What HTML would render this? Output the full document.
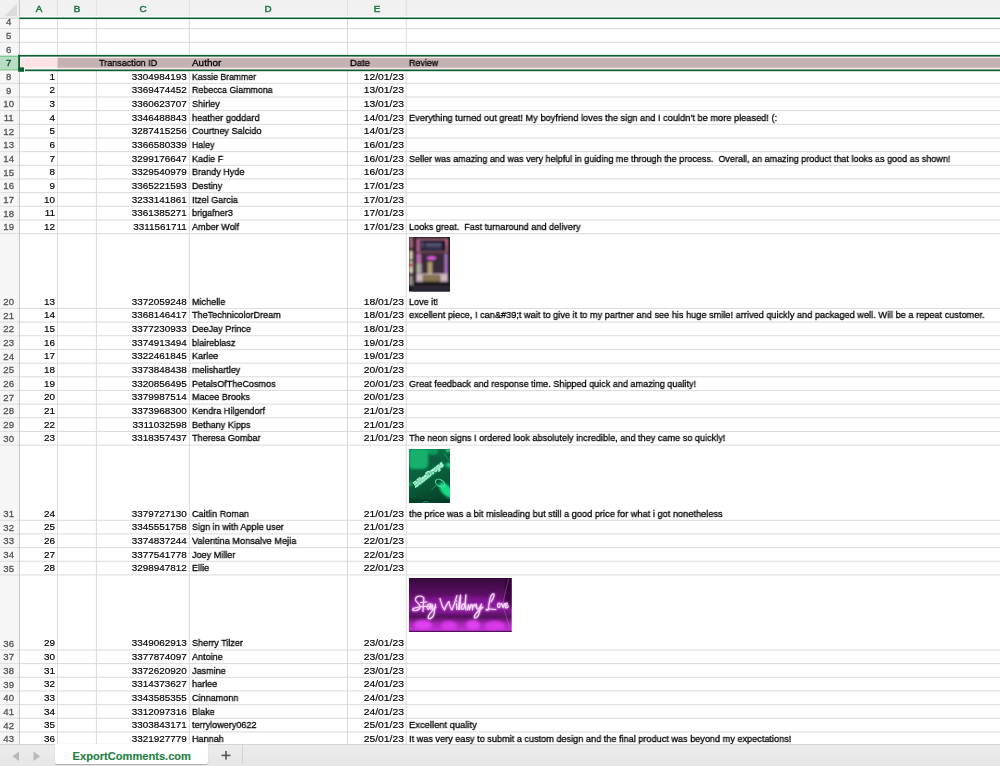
<!DOCTYPE html>
<html><head><meta charset="utf-8"><style>
*{margin:0;padding:0;box-sizing:border-box}
html,body{width:1000px;height:766px;overflow:hidden;background:#fff}
body{position:relative;font-family:"Liberation Sans",sans-serif;color:#000}
.t{position:absolute;white-space:pre;will-change:transform;font-size:9.8px;line-height:10.9466px;height:10.9466px;-webkit-text-stroke:0.3px #000}
.l{transform-origin:0 0}
.r{text-align:right;transform-origin:100% 0;-webkit-text-stroke-width:0.18px}
.n{color:#6b6b6b;text-align:center;width:19.4px;left:-0.7px;font-size:9.6px;-webkit-text-stroke:0.3px #555}
svg{position:absolute;left:0;top:0}
</style></head><body>

<svg width="1000" height="766" viewBox="0 0 1000 766">
<rect x="0" y="0" width="1000" height="18" fill="#f1f1f1"/>
<rect x="0" y="18" width="19.4" height="727" fill="#f6f6f6"/>
<path d="M4.2 16.3 L17 16.3 L17 3.4 Z" fill="#dcdcdc"/>
<line x1="0" y1="18.3" x2="19.4" y2="18.3" stroke="#d2d2d2" stroke-width="1"/>
<line x1="57.5" y1="0" x2="57.5" y2="16" stroke="#e0e0e0" stroke-width="1"/>
<line x1="96.4" y1="0" x2="96.4" y2="16" stroke="#e0e0e0" stroke-width="1"/>
<line x1="189.3" y1="0" x2="189.3" y2="16" stroke="#e0e0e0" stroke-width="1"/>
<line x1="347.5" y1="0" x2="347.5" y2="16" stroke="#e0e0e0" stroke-width="1"/>
<line x1="406.2" y1="0" x2="406.2" y2="16" stroke="#e0e0e0" stroke-width="1"/>
<line x1="19.4" y1="28.62" x2="1000" y2="28.62" stroke="#dadada" stroke-width="1"/>
<line x1="0" y1="28.62" x2="19.4" y2="28.62" stroke="#dedede" stroke-width="1"/>
<line x1="19.4" y1="42.29" x2="1000" y2="42.29" stroke="#dadada" stroke-width="1"/>
<line x1="0" y1="42.29" x2="19.4" y2="42.29" stroke="#dedede" stroke-width="1"/>
<line x1="19.4" y1="55.96" x2="1000" y2="55.96" stroke="#dadada" stroke-width="1"/>
<line x1="0" y1="55.96" x2="19.4" y2="55.96" stroke="#dedede" stroke-width="1"/>
<line x1="19.4" y1="69.63" x2="1000" y2="69.63" stroke="#dadada" stroke-width="1"/>
<line x1="0" y1="69.63" x2="19.4" y2="69.63" stroke="#dedede" stroke-width="1"/>
<line x1="19.4" y1="83.30" x2="1000" y2="83.30" stroke="#dadada" stroke-width="1"/>
<line x1="0" y1="83.30" x2="19.4" y2="83.30" stroke="#dedede" stroke-width="1"/>
<line x1="19.4" y1="96.97" x2="1000" y2="96.97" stroke="#dadada" stroke-width="1"/>
<line x1="0" y1="96.97" x2="19.4" y2="96.97" stroke="#dedede" stroke-width="1"/>
<line x1="19.4" y1="110.64" x2="1000" y2="110.64" stroke="#dadada" stroke-width="1"/>
<line x1="0" y1="110.64" x2="19.4" y2="110.64" stroke="#dedede" stroke-width="1"/>
<line x1="19.4" y1="124.31" x2="1000" y2="124.31" stroke="#dadada" stroke-width="1"/>
<line x1="0" y1="124.31" x2="19.4" y2="124.31" stroke="#dedede" stroke-width="1"/>
<line x1="19.4" y1="137.98" x2="1000" y2="137.98" stroke="#dadada" stroke-width="1"/>
<line x1="0" y1="137.98" x2="19.4" y2="137.98" stroke="#dedede" stroke-width="1"/>
<line x1="19.4" y1="151.65" x2="1000" y2="151.65" stroke="#dadada" stroke-width="1"/>
<line x1="0" y1="151.65" x2="19.4" y2="151.65" stroke="#dedede" stroke-width="1"/>
<line x1="19.4" y1="165.32" x2="1000" y2="165.32" stroke="#dadada" stroke-width="1"/>
<line x1="0" y1="165.32" x2="19.4" y2="165.32" stroke="#dedede" stroke-width="1"/>
<line x1="19.4" y1="178.99" x2="1000" y2="178.99" stroke="#dadada" stroke-width="1"/>
<line x1="0" y1="178.99" x2="19.4" y2="178.99" stroke="#dedede" stroke-width="1"/>
<line x1="19.4" y1="192.66" x2="1000" y2="192.66" stroke="#dadada" stroke-width="1"/>
<line x1="0" y1="192.66" x2="19.4" y2="192.66" stroke="#dedede" stroke-width="1"/>
<line x1="19.4" y1="206.33" x2="1000" y2="206.33" stroke="#dadada" stroke-width="1"/>
<line x1="0" y1="206.33" x2="19.4" y2="206.33" stroke="#dedede" stroke-width="1"/>
<line x1="19.4" y1="220.00" x2="1000" y2="220.00" stroke="#dadada" stroke-width="1"/>
<line x1="0" y1="220.00" x2="19.4" y2="220.00" stroke="#dedede" stroke-width="1"/>
<line x1="19.4" y1="233.67" x2="1000" y2="233.67" stroke="#dadada" stroke-width="1"/>
<line x1="0" y1="233.67" x2="19.4" y2="233.67" stroke="#dedede" stroke-width="1"/>
<line x1="19.4" y1="308.42" x2="1000" y2="308.42" stroke="#dadada" stroke-width="1"/>
<line x1="0" y1="308.42" x2="19.4" y2="308.42" stroke="#dedede" stroke-width="1"/>
<line x1="19.4" y1="322.09" x2="1000" y2="322.09" stroke="#dadada" stroke-width="1"/>
<line x1="0" y1="322.09" x2="19.4" y2="322.09" stroke="#dedede" stroke-width="1"/>
<line x1="19.4" y1="335.76" x2="1000" y2="335.76" stroke="#dadada" stroke-width="1"/>
<line x1="0" y1="335.76" x2="19.4" y2="335.76" stroke="#dedede" stroke-width="1"/>
<line x1="19.4" y1="349.43" x2="1000" y2="349.43" stroke="#dadada" stroke-width="1"/>
<line x1="0" y1="349.43" x2="19.4" y2="349.43" stroke="#dedede" stroke-width="1"/>
<line x1="19.4" y1="363.10" x2="1000" y2="363.10" stroke="#dadada" stroke-width="1"/>
<line x1="0" y1="363.10" x2="19.4" y2="363.10" stroke="#dedede" stroke-width="1"/>
<line x1="19.4" y1="376.77" x2="1000" y2="376.77" stroke="#dadada" stroke-width="1"/>
<line x1="0" y1="376.77" x2="19.4" y2="376.77" stroke="#dedede" stroke-width="1"/>
<line x1="19.4" y1="390.44" x2="1000" y2="390.44" stroke="#dadada" stroke-width="1"/>
<line x1="0" y1="390.44" x2="19.4" y2="390.44" stroke="#dedede" stroke-width="1"/>
<line x1="19.4" y1="404.11" x2="1000" y2="404.11" stroke="#dadada" stroke-width="1"/>
<line x1="0" y1="404.11" x2="19.4" y2="404.11" stroke="#dedede" stroke-width="1"/>
<line x1="19.4" y1="417.78" x2="1000" y2="417.78" stroke="#dadada" stroke-width="1"/>
<line x1="0" y1="417.78" x2="19.4" y2="417.78" stroke="#dedede" stroke-width="1"/>
<line x1="19.4" y1="431.45" x2="1000" y2="431.45" stroke="#dadada" stroke-width="1"/>
<line x1="0" y1="431.45" x2="19.4" y2="431.45" stroke="#dedede" stroke-width="1"/>
<line x1="19.4" y1="445.12" x2="1000" y2="445.12" stroke="#dadada" stroke-width="1"/>
<line x1="0" y1="445.12" x2="19.4" y2="445.12" stroke="#dedede" stroke-width="1"/>
<line x1="19.4" y1="520.27" x2="1000" y2="520.27" stroke="#dadada" stroke-width="1"/>
<line x1="0" y1="520.27" x2="19.4" y2="520.27" stroke="#dedede" stroke-width="1"/>
<line x1="19.4" y1="533.94" x2="1000" y2="533.94" stroke="#dadada" stroke-width="1"/>
<line x1="0" y1="533.94" x2="19.4" y2="533.94" stroke="#dedede" stroke-width="1"/>
<line x1="19.4" y1="547.61" x2="1000" y2="547.61" stroke="#dadada" stroke-width="1"/>
<line x1="0" y1="547.61" x2="19.4" y2="547.61" stroke="#dedede" stroke-width="1"/>
<line x1="19.4" y1="561.28" x2="1000" y2="561.28" stroke="#dadada" stroke-width="1"/>
<line x1="0" y1="561.28" x2="19.4" y2="561.28" stroke="#dedede" stroke-width="1"/>
<line x1="19.4" y1="574.95" x2="1000" y2="574.95" stroke="#dadada" stroke-width="1"/>
<line x1="0" y1="574.95" x2="19.4" y2="574.95" stroke="#dedede" stroke-width="1"/>
<line x1="19.4" y1="649.95" x2="1000" y2="649.95" stroke="#dadada" stroke-width="1"/>
<line x1="0" y1="649.95" x2="19.4" y2="649.95" stroke="#dedede" stroke-width="1"/>
<line x1="19.4" y1="663.62" x2="1000" y2="663.62" stroke="#dadada" stroke-width="1"/>
<line x1="0" y1="663.62" x2="19.4" y2="663.62" stroke="#dedede" stroke-width="1"/>
<line x1="19.4" y1="677.29" x2="1000" y2="677.29" stroke="#dadada" stroke-width="1"/>
<line x1="0" y1="677.29" x2="19.4" y2="677.29" stroke="#dedede" stroke-width="1"/>
<line x1="19.4" y1="690.96" x2="1000" y2="690.96" stroke="#dadada" stroke-width="1"/>
<line x1="0" y1="690.96" x2="19.4" y2="690.96" stroke="#dedede" stroke-width="1"/>
<line x1="19.4" y1="704.63" x2="1000" y2="704.63" stroke="#dadada" stroke-width="1"/>
<line x1="0" y1="704.63" x2="19.4" y2="704.63" stroke="#dedede" stroke-width="1"/>
<line x1="19.4" y1="718.30" x2="1000" y2="718.30" stroke="#dadada" stroke-width="1"/>
<line x1="0" y1="718.30" x2="19.4" y2="718.30" stroke="#dedede" stroke-width="1"/>
<line x1="19.4" y1="731.97" x2="1000" y2="731.97" stroke="#dadada" stroke-width="1"/>
<line x1="0" y1="731.97" x2="19.4" y2="731.97" stroke="#dedede" stroke-width="1"/>
<line x1="57.5" y1="18" x2="57.5" y2="744.5" stroke="#dadada" stroke-width="1"/>
<line x1="96.4" y1="18" x2="96.4" y2="744.5" stroke="#dadada" stroke-width="1"/>
<line x1="189.3" y1="18" x2="189.3" y2="744.5" stroke="#dadada" stroke-width="1"/>
<line x1="347.5" y1="18" x2="347.5" y2="744.5" stroke="#dadada" stroke-width="1"/>
<line x1="406.2" y1="18" x2="406.2" y2="744.5" stroke="#dadada" stroke-width="1"/>
<line x1="19.4" y1="0" x2="19.4" y2="744.5" stroke="#c4c4c4" stroke-width="1"/>
<rect x="19.4" y="55.959999999999994" width="981" height="13.670000000000002" fill="#fff"/>
<rect x="57.5" y="56.6" width="942.5" height="12.9" fill="#f7e3e8"/>
<rect x="21" y="58.1" width="36.5" height="9.6" fill="#fde3e3"/>
<rect x="57.5" y="58.1" width="942.5" height="9.6" fill="#c5b1b2"/>
<rect x="0" y="55.959999999999994" width="19" height="13.670000000000002" fill="#b9dcc4"/>
<line x1="0" y1="56.35999999999999" x2="19" y2="56.35999999999999" stroke="#7cc790" stroke-width="1.2"/>
<line x1="0" y1="69.83" x2="19" y2="69.83" stroke="#7cc790" stroke-width="1.2"/>
<rect x="19.4" y="17.3" width="981" height="1.8" fill="#0d6031"/>
<rect x="19.4" y="15.9" width="981" height="1.4" fill="#fbfbfb"/>
<rect x="18.2" y="54.9" width="982" height="1.7" fill="#0d6031"/>
<rect x="18.2" y="54.9" width="1.9" height="15" fill="#0d6031"/>
<rect x="25" y="69.5" width="975" height="1.7" fill="#0d6031"/>
<rect x="18.2" y="67.4" width="5.8" height="4.4" fill="#0d6031"/>
</svg>
<div class="t" style="left:29.4px;width:20px;text-align:center;top:3.6px;color:#237a47;font-size:9.8px;-webkit-text-stroke:0.55px #237a47">A</div>
<div class="t" style="left:67px;width:20px;text-align:center;top:3.6px;color:#237a47;font-size:9.8px;-webkit-text-stroke:0.55px #237a47">B</div>
<div class="t" style="left:133px;width:20px;text-align:center;top:3.6px;color:#237a47;font-size:9.8px;-webkit-text-stroke:0.55px #237a47">C</div>
<div class="t" style="left:258.4px;width:20px;text-align:center;top:3.6px;color:#237a47;font-size:9.8px;-webkit-text-stroke:0.55px #237a47">D</div>
<div class="t" style="left:367px;width:20px;text-align:center;top:3.6px;color:#237a47;font-size:9.8px;-webkit-text-stroke:0.55px #237a47">E</div>
<div class="t n" style="top:17.25px;color:#555555;-webkit-text-stroke-color:#555555">4</div>
<div class="t n" style="top:30.92px;color:#555555;-webkit-text-stroke-color:#555555">5</div>
<div class="t n" style="top:44.59px;color:#555555;-webkit-text-stroke-color:#555555">6</div>
<div class="t n" style="top:58.26px;color:#17603a;-webkit-text-stroke-color:#17603a;-webkit-text-stroke-width:0.45px">7</div>
<div class="t n" style="top:71.93px;color:#555555;-webkit-text-stroke-color:#555555">8</div>
<div class="t n" style="top:85.60px;color:#555555;-webkit-text-stroke-color:#555555">9</div>
<div class="t n" style="top:99.27px;color:#555555;-webkit-text-stroke-color:#555555">10</div>
<div class="t n" style="top:112.94px;color:#555555;-webkit-text-stroke-color:#555555">11</div>
<div class="t n" style="top:126.61px;color:#555555;-webkit-text-stroke-color:#555555">12</div>
<div class="t n" style="top:140.28px;color:#555555;-webkit-text-stroke-color:#555555">13</div>
<div class="t n" style="top:153.95px;color:#555555;-webkit-text-stroke-color:#555555">14</div>
<div class="t n" style="top:167.62px;color:#555555;-webkit-text-stroke-color:#555555">15</div>
<div class="t n" style="top:181.29px;color:#555555;-webkit-text-stroke-color:#555555">16</div>
<div class="t n" style="top:194.96px;color:#555555;-webkit-text-stroke-color:#555555">17</div>
<div class="t n" style="top:208.63px;color:#555555;-webkit-text-stroke-color:#555555">18</div>
<div class="t n" style="top:222.30px;color:#555555;-webkit-text-stroke-color:#555555">19</div>
<div class="t n" style="top:297.05px;color:#555555;-webkit-text-stroke-color:#555555">20</div>
<div class="t n" style="top:310.72px;color:#555555;-webkit-text-stroke-color:#555555">21</div>
<div class="t n" style="top:324.39px;color:#555555;-webkit-text-stroke-color:#555555">22</div>
<div class="t n" style="top:338.06px;color:#555555;-webkit-text-stroke-color:#555555">23</div>
<div class="t n" style="top:351.73px;color:#555555;-webkit-text-stroke-color:#555555">24</div>
<div class="t n" style="top:365.40px;color:#555555;-webkit-text-stroke-color:#555555">25</div>
<div class="t n" style="top:379.07px;color:#555555;-webkit-text-stroke-color:#555555">26</div>
<div class="t n" style="top:392.74px;color:#555555;-webkit-text-stroke-color:#555555">27</div>
<div class="t n" style="top:406.41px;color:#555555;-webkit-text-stroke-color:#555555">28</div>
<div class="t n" style="top:420.08px;color:#555555;-webkit-text-stroke-color:#555555">29</div>
<div class="t n" style="top:433.75px;color:#555555;-webkit-text-stroke-color:#555555">30</div>
<div class="t n" style="top:508.90px;color:#555555;-webkit-text-stroke-color:#555555">31</div>
<div class="t n" style="top:522.57px;color:#555555;-webkit-text-stroke-color:#555555">32</div>
<div class="t n" style="top:536.24px;color:#555555;-webkit-text-stroke-color:#555555">33</div>
<div class="t n" style="top:549.91px;color:#555555;-webkit-text-stroke-color:#555555">34</div>
<div class="t n" style="top:563.58px;color:#555555;-webkit-text-stroke-color:#555555">35</div>
<div class="t n" style="top:638.58px;color:#555555;-webkit-text-stroke-color:#555555">36</div>
<div class="t n" style="top:652.25px;color:#555555;-webkit-text-stroke-color:#555555">37</div>
<div class="t n" style="top:665.92px;color:#555555;-webkit-text-stroke-color:#555555">38</div>
<div class="t n" style="top:679.59px;color:#555555;-webkit-text-stroke-color:#555555">39</div>
<div class="t n" style="top:693.26px;color:#555555;-webkit-text-stroke-color:#555555">40</div>
<div class="t n" style="top:706.93px;color:#555555;-webkit-text-stroke-color:#555555">41</div>
<div class="t n" style="top:720.60px;color:#555555;-webkit-text-stroke-color:#555555">42</div>
<div class="t n" style="top:734.27px;color:#555555;-webkit-text-stroke-color:#555555">43</div>
<div class="t l" style="left:98.7px;top:57.91px;transform:scaleX(0.9192)">Transaction ID</div>
<div class="t l" style="left:191.9px;top:57.91px;transform:scaleX(1.0122)">Author</div>
<div class="t l" style="left:349.8px;top:57.91px;transform:scaleX(0.9611)">Date</div>
<div class="t l" style="left:408.5px;top:57.91px;transform:scaleX(0.9100)">Review</div>
<div class="t r" style="left:19.4px;width:36.00px;top:71.58px;font-size:9.8px;line-height:10.947px;height:10.947px;transform:scaleX(1.0090)">1</div>
<div class="t r" style="left:96.4px;width:90.80px;top:71.58px;font-size:9.8px;line-height:10.947px;height:10.947px;transform:scaleX(1.0090)">3304984193</div>
<div class="t l" style="left:191.9px;top:71.58px;transform:scaleX(0.8824)">Kassie Brammer</div>
<div class="t r" style="left:347.5px;width:55.90px;top:71.58px;font-size:9.8px;line-height:10.947px;height:10.947px;transform:scaleX(1.0531)">12/01/23</div>
<div class="t r" style="left:19.4px;width:36.00px;top:85.25px;font-size:9.8px;line-height:10.947px;height:10.947px;transform:scaleX(1.0090)">2</div>
<div class="t r" style="left:96.4px;width:90.80px;top:85.25px;font-size:9.8px;line-height:10.947px;height:10.947px;transform:scaleX(1.0090)">3369474452</div>
<div class="t l" style="left:191.9px;top:85.25px;transform:scaleX(0.9028)">Rebecca Giammona</div>
<div class="t r" style="left:347.5px;width:55.90px;top:85.25px;font-size:9.8px;line-height:10.947px;height:10.947px;transform:scaleX(1.0531)">13/01/23</div>
<div class="t r" style="left:19.4px;width:36.00px;top:98.92px;font-size:9.8px;line-height:10.947px;height:10.947px;transform:scaleX(1.0090)">3</div>
<div class="t r" style="left:96.4px;width:90.80px;top:98.92px;font-size:9.8px;line-height:10.947px;height:10.947px;transform:scaleX(1.0090)">3360623707</div>
<div class="t l" style="left:191.9px;top:98.92px;transform:scaleX(0.9294)">Shirley</div>
<div class="t r" style="left:347.5px;width:55.90px;top:98.92px;font-size:9.8px;line-height:10.947px;height:10.947px;transform:scaleX(1.0531)">13/01/23</div>
<div class="t r" style="left:19.4px;width:36.00px;top:112.59px;font-size:9.8px;line-height:10.947px;height:10.947px;transform:scaleX(1.0090)">4</div>
<div class="t r" style="left:96.4px;width:90.80px;top:112.59px;font-size:9.8px;line-height:10.947px;height:10.947px;transform:scaleX(1.0090)">3346488843</div>
<div class="t l" style="left:191.9px;top:112.59px;transform:scaleX(0.9396)">heather goddard</div>
<div class="t r" style="left:347.5px;width:55.90px;top:112.59px;font-size:9.8px;line-height:10.947px;height:10.947px;transform:scaleX(1.0531)">14/01/23</div>
<div class="t l" style="left:408.5px;top:112.59px;transform:scaleX(0.9427)">Everything turned out great! My boyfriend loves the sign and I couldn’t be more pleased! (:</div>
<div class="t r" style="left:19.4px;width:36.00px;top:126.26px;font-size:9.8px;line-height:10.947px;height:10.947px;transform:scaleX(1.0090)">5</div>
<div class="t r" style="left:96.4px;width:90.80px;top:126.26px;font-size:9.8px;line-height:10.947px;height:10.947px;transform:scaleX(1.0090)">3287415256</div>
<div class="t l" style="left:191.9px;top:126.26px;transform:scaleX(0.9304)">Courtney Salcido</div>
<div class="t r" style="left:347.5px;width:55.90px;top:126.26px;font-size:9.8px;line-height:10.947px;height:10.947px;transform:scaleX(1.0531)">14/01/23</div>
<div class="t r" style="left:19.4px;width:36.00px;top:139.93px;font-size:9.8px;line-height:10.947px;height:10.947px;transform:scaleX(1.0090)">6</div>
<div class="t r" style="left:96.4px;width:90.80px;top:139.93px;font-size:9.8px;line-height:10.947px;height:10.947px;transform:scaleX(1.0090)">3366580339</div>
<div class="t l" style="left:191.9px;top:139.93px;transform:scaleX(0.8916)">Haley</div>
<div class="t r" style="left:347.5px;width:55.90px;top:139.93px;font-size:9.8px;line-height:10.947px;height:10.947px;transform:scaleX(1.0531)">16/01/23</div>
<div class="t r" style="left:19.4px;width:36.00px;top:153.60px;font-size:9.8px;line-height:10.947px;height:10.947px;transform:scaleX(1.0090)">7</div>
<div class="t r" style="left:96.4px;width:90.80px;top:153.60px;font-size:9.8px;line-height:10.947px;height:10.947px;transform:scaleX(1.0090)">3299176647</div>
<div class="t l" style="left:191.9px;top:153.60px;transform:scaleX(0.9253)">Kadie F</div>
<div class="t r" style="left:347.5px;width:55.90px;top:153.60px;font-size:9.8px;line-height:10.947px;height:10.947px;transform:scaleX(1.0531)">16/01/23</div>
<div class="t l" style="left:408.5px;top:153.60px;transform:scaleX(0.9222)">Seller was amazing and was very helpful in guiding me through the process.  Overall, an amazing product that looks as good as shown!</div>
<div class="t r" style="left:19.4px;width:36.00px;top:167.27px;font-size:9.8px;line-height:10.947px;height:10.947px;transform:scaleX(1.0090)">8</div>
<div class="t r" style="left:96.4px;width:90.80px;top:167.27px;font-size:9.8px;line-height:10.947px;height:10.947px;transform:scaleX(1.0090)">3329540979</div>
<div class="t l" style="left:191.9px;top:167.27px;transform:scaleX(0.9253)">Brandy Hyde</div>
<div class="t r" style="left:347.5px;width:55.90px;top:167.27px;font-size:9.8px;line-height:10.947px;height:10.947px;transform:scaleX(1.0531)">16/01/23</div>
<div class="t r" style="left:19.4px;width:36.00px;top:180.94px;font-size:9.8px;line-height:10.947px;height:10.947px;transform:scaleX(1.0090)">9</div>
<div class="t r" style="left:96.4px;width:90.80px;top:180.94px;font-size:9.8px;line-height:10.947px;height:10.947px;transform:scaleX(1.0090)">3365221593</div>
<div class="t l" style="left:191.9px;top:180.94px;transform:scaleX(0.9253)">Destiny</div>
<div class="t r" style="left:347.5px;width:55.90px;top:180.94px;font-size:9.8px;line-height:10.947px;height:10.947px;transform:scaleX(1.0531)">17/01/23</div>
<div class="t r" style="left:19.4px;width:36.00px;top:194.61px;font-size:9.8px;line-height:10.947px;height:10.947px;transform:scaleX(1.0090)">10</div>
<div class="t r" style="left:96.4px;width:90.80px;top:194.61px;font-size:9.8px;line-height:10.947px;height:10.947px;transform:scaleX(1.0090)">3233141861</div>
<div class="t l" style="left:191.9px;top:194.61px;transform:scaleX(0.9253)">Itzel Garcia</div>
<div class="t r" style="left:347.5px;width:55.90px;top:194.61px;font-size:9.8px;line-height:10.947px;height:10.947px;transform:scaleX(1.0531)">17/01/23</div>
<div class="t r" style="left:19.4px;width:36.00px;top:208.28px;font-size:9.8px;line-height:10.947px;height:10.947px;transform:scaleX(1.0090)">11</div>
<div class="t r" style="left:96.4px;width:90.80px;top:208.28px;font-size:9.8px;line-height:10.947px;height:10.947px;transform:scaleX(1.0090)">3361385271</div>
<div class="t l" style="left:191.9px;top:208.28px;transform:scaleX(0.9253)">brigafner3</div>
<div class="t r" style="left:347.5px;width:55.90px;top:208.28px;font-size:9.8px;line-height:10.947px;height:10.947px;transform:scaleX(1.0531)">17/01/23</div>
<div class="t r" style="left:19.4px;width:36.00px;top:221.95px;font-size:9.8px;line-height:10.947px;height:10.947px;transform:scaleX(1.0090)">12</div>
<div class="t r" style="left:96.4px;width:90.80px;top:221.95px;font-size:9.8px;line-height:10.947px;height:10.947px;transform:scaleX(1.0090)">3311561711</div>
<div class="t l" style="left:191.9px;top:221.95px;transform:scaleX(0.9253)">Amber Wolf</div>
<div class="t r" style="left:347.5px;width:55.90px;top:221.95px;font-size:9.8px;line-height:10.947px;height:10.947px;transform:scaleX(1.0531)">17/01/23</div>
<div class="t l" style="left:408.5px;top:221.95px;transform:scaleX(0.9315)">Looks great.  Fast turnaround and delivery</div>
<div class="t r" style="left:19.4px;width:36.00px;top:296.70px;font-size:9.8px;line-height:10.947px;height:10.947px;transform:scaleX(1.0090)">13</div>
<div class="t r" style="left:96.4px;width:90.80px;top:296.70px;font-size:9.8px;line-height:10.947px;height:10.947px;transform:scaleX(1.0090)">3372059248</div>
<div class="t l" style="left:191.9px;top:296.70px;transform:scaleX(0.9253)">Michelle</div>
<div class="t r" style="left:347.5px;width:55.90px;top:296.70px;font-size:9.8px;line-height:10.947px;height:10.947px;transform:scaleX(1.0531)">18/01/23</div>
<div class="t l" style="left:408.5px;top:296.70px;transform:scaleX(0.9222)">Love it!</div>
<div class="t r" style="left:19.4px;width:36.00px;top:310.37px;font-size:9.8px;line-height:10.947px;height:10.947px;transform:scaleX(1.0090)">14</div>
<div class="t r" style="left:96.4px;width:90.80px;top:310.37px;font-size:9.8px;line-height:10.947px;height:10.947px;transform:scaleX(1.0090)">3368146417</div>
<div class="t l" style="left:191.9px;top:310.37px;transform:scaleX(0.9253)">TheTechnicolorDream</div>
<div class="t r" style="left:347.5px;width:55.90px;top:310.37px;font-size:9.8px;line-height:10.947px;height:10.947px;transform:scaleX(1.0531)">18/01/23</div>
<div class="t l" style="left:408.5px;top:310.37px;transform:scaleX(0.9386)">excellent piece, I can&amp;#39;t wait to give it to my partner and see his huge smile! arrived quickly and packaged well. Will be a repeat customer.</div>
<div class="t r" style="left:19.4px;width:36.00px;top:324.04px;font-size:9.8px;line-height:10.947px;height:10.947px;transform:scaleX(1.0090)">15</div>
<div class="t r" style="left:96.4px;width:90.80px;top:324.04px;font-size:9.8px;line-height:10.947px;height:10.947px;transform:scaleX(1.0090)">3377230933</div>
<div class="t l" style="left:191.9px;top:324.04px;transform:scaleX(0.9253)">DeeJay Prince</div>
<div class="t r" style="left:347.5px;width:55.90px;top:324.04px;font-size:9.8px;line-height:10.947px;height:10.947px;transform:scaleX(1.0531)">18/01/23</div>
<div class="t r" style="left:19.4px;width:36.00px;top:337.71px;font-size:9.8px;line-height:10.947px;height:10.947px;transform:scaleX(1.0090)">16</div>
<div class="t r" style="left:96.4px;width:90.80px;top:337.71px;font-size:9.8px;line-height:10.947px;height:10.947px;transform:scaleX(1.0090)">3374913494</div>
<div class="t l" style="left:191.9px;top:337.71px;transform:scaleX(0.9253)">blaireblasz</div>
<div class="t r" style="left:347.5px;width:55.90px;top:337.71px;font-size:9.8px;line-height:10.947px;height:10.947px;transform:scaleX(1.0531)">19/01/23</div>
<div class="t r" style="left:19.4px;width:36.00px;top:351.38px;font-size:9.8px;line-height:10.947px;height:10.947px;transform:scaleX(1.0090)">17</div>
<div class="t r" style="left:96.4px;width:90.80px;top:351.38px;font-size:9.8px;line-height:10.947px;height:10.947px;transform:scaleX(1.0090)">3322461845</div>
<div class="t l" style="left:191.9px;top:351.38px;transform:scaleX(0.9253)">Karlee</div>
<div class="t r" style="left:347.5px;width:55.90px;top:351.38px;font-size:9.8px;line-height:10.947px;height:10.947px;transform:scaleX(1.0531)">19/01/23</div>
<div class="t r" style="left:19.4px;width:36.00px;top:365.05px;font-size:9.8px;line-height:10.947px;height:10.947px;transform:scaleX(1.0090)">18</div>
<div class="t r" style="left:96.4px;width:90.80px;top:365.05px;font-size:9.8px;line-height:10.947px;height:10.947px;transform:scaleX(1.0090)">3373848438</div>
<div class="t l" style="left:191.9px;top:365.05px;transform:scaleX(0.9253)">melishartley</div>
<div class="t r" style="left:347.5px;width:55.90px;top:365.05px;font-size:9.8px;line-height:10.947px;height:10.947px;transform:scaleX(1.0531)">20/01/23</div>
<div class="t r" style="left:19.4px;width:36.00px;top:378.72px;font-size:9.8px;line-height:10.947px;height:10.947px;transform:scaleX(1.0090)">19</div>
<div class="t r" style="left:96.4px;width:90.80px;top:378.72px;font-size:9.8px;line-height:10.947px;height:10.947px;transform:scaleX(1.0090)">3320856495</div>
<div class="t l" style="left:191.9px;top:378.72px;transform:scaleX(0.9253)">PetalsOfTheCosmos</div>
<div class="t r" style="left:347.5px;width:55.90px;top:378.72px;font-size:9.8px;line-height:10.947px;height:10.947px;transform:scaleX(1.0531)">20/01/23</div>
<div class="t l" style="left:408.5px;top:378.72px;transform:scaleX(0.9263)">Great feedback and response time. Shipped quick and amazing quality!</div>
<div class="t r" style="left:19.4px;width:36.00px;top:392.39px;font-size:9.8px;line-height:10.947px;height:10.947px;transform:scaleX(1.0090)">20</div>
<div class="t r" style="left:96.4px;width:90.80px;top:392.39px;font-size:9.8px;line-height:10.947px;height:10.947px;transform:scaleX(1.0090)">3379987514</div>
<div class="t l" style="left:191.9px;top:392.39px;transform:scaleX(0.9253)">Macee Brooks</div>
<div class="t r" style="left:347.5px;width:55.90px;top:392.39px;font-size:9.8px;line-height:10.947px;height:10.947px;transform:scaleX(1.0531)">20/01/23</div>
<div class="t r" style="left:19.4px;width:36.00px;top:406.06px;font-size:9.8px;line-height:10.947px;height:10.947px;transform:scaleX(1.0090)">21</div>
<div class="t r" style="left:96.4px;width:90.80px;top:406.06px;font-size:9.8px;line-height:10.947px;height:10.947px;transform:scaleX(1.0090)">3373968300</div>
<div class="t l" style="left:191.9px;top:406.06px;transform:scaleX(0.9253)">Kendra Hilgendorf</div>
<div class="t r" style="left:347.5px;width:55.90px;top:406.06px;font-size:9.8px;line-height:10.947px;height:10.947px;transform:scaleX(1.0531)">21/01/23</div>
<div class="t r" style="left:19.4px;width:36.00px;top:419.73px;font-size:9.8px;line-height:10.947px;height:10.947px;transform:scaleX(1.0090)">22</div>
<div class="t r" style="left:96.4px;width:90.80px;top:419.73px;font-size:9.8px;line-height:10.947px;height:10.947px;transform:scaleX(1.0090)">3311032598</div>
<div class="t l" style="left:191.9px;top:419.73px;transform:scaleX(0.9253)">Bethany Kipps</div>
<div class="t r" style="left:347.5px;width:55.90px;top:419.73px;font-size:9.8px;line-height:10.947px;height:10.947px;transform:scaleX(1.0531)">21/01/23</div>
<div class="t r" style="left:19.4px;width:36.00px;top:433.40px;font-size:9.8px;line-height:10.947px;height:10.947px;transform:scaleX(1.0090)">23</div>
<div class="t r" style="left:96.4px;width:90.80px;top:433.40px;font-size:9.8px;line-height:10.947px;height:10.947px;transform:scaleX(1.0090)">3318357437</div>
<div class="t l" style="left:191.9px;top:433.40px;transform:scaleX(0.9253)">Theresa Gombar</div>
<div class="t r" style="left:347.5px;width:55.90px;top:433.40px;font-size:9.8px;line-height:10.947px;height:10.947px;transform:scaleX(1.0531)">21/01/23</div>
<div class="t l" style="left:408.5px;top:433.40px;transform:scaleX(0.9325)">The neon signs I ordered look absolutely incredible, and they came so quickly!</div>
<div class="t r" style="left:19.4px;width:36.00px;top:508.55px;font-size:9.8px;line-height:10.947px;height:10.947px;transform:scaleX(1.0090)">24</div>
<div class="t r" style="left:96.4px;width:90.80px;top:508.55px;font-size:9.8px;line-height:10.947px;height:10.947px;transform:scaleX(1.0090)">3379727130</div>
<div class="t l" style="left:191.9px;top:508.55px;transform:scaleX(0.9253)">Caitlin Roman</div>
<div class="t r" style="left:347.5px;width:55.90px;top:508.55px;font-size:9.8px;line-height:10.947px;height:10.947px;transform:scaleX(1.0531)">21/01/23</div>
<div class="t l" style="left:408.5px;top:508.55px;transform:scaleX(0.9427)">the price was a bit misleading but still a good price for what i got nonetheless</div>
<div class="t r" style="left:19.4px;width:36.00px;top:522.22px;font-size:9.8px;line-height:10.947px;height:10.947px;transform:scaleX(1.0090)">25</div>
<div class="t r" style="left:96.4px;width:90.80px;top:522.22px;font-size:9.8px;line-height:10.947px;height:10.947px;transform:scaleX(1.0090)">3345551758</div>
<div class="t l" style="left:191.9px;top:522.22px;transform:scaleX(0.9253)">Sign in with Apple user</div>
<div class="t r" style="left:347.5px;width:55.90px;top:522.22px;font-size:9.8px;line-height:10.947px;height:10.947px;transform:scaleX(1.0531)">21/01/23</div>
<div class="t r" style="left:19.4px;width:36.00px;top:535.89px;font-size:9.8px;line-height:10.947px;height:10.947px;transform:scaleX(1.0090)">26</div>
<div class="t r" style="left:96.4px;width:90.80px;top:535.89px;font-size:9.8px;line-height:10.947px;height:10.947px;transform:scaleX(1.0090)">3374837244</div>
<div class="t l" style="left:191.9px;top:535.89px;transform:scaleX(0.9407)">Valentina Monsalve Mejia</div>
<div class="t r" style="left:347.5px;width:55.90px;top:535.89px;font-size:9.8px;line-height:10.947px;height:10.947px;transform:scaleX(1.0531)">22/01/23</div>
<div class="t r" style="left:19.4px;width:36.00px;top:549.56px;font-size:9.8px;line-height:10.947px;height:10.947px;transform:scaleX(1.0090)">27</div>
<div class="t r" style="left:96.4px;width:90.80px;top:549.56px;font-size:9.8px;line-height:10.947px;height:10.947px;transform:scaleX(1.0090)">3377541778</div>
<div class="t l" style="left:191.9px;top:549.56px;transform:scaleX(0.9253)">Joey Miller</div>
<div class="t r" style="left:347.5px;width:55.90px;top:549.56px;font-size:9.8px;line-height:10.947px;height:10.947px;transform:scaleX(1.0531)">22/01/23</div>
<div class="t r" style="left:19.4px;width:36.00px;top:563.23px;font-size:9.8px;line-height:10.947px;height:10.947px;transform:scaleX(1.0090)">28</div>
<div class="t r" style="left:96.4px;width:90.80px;top:563.23px;font-size:9.8px;line-height:10.947px;height:10.947px;transform:scaleX(1.0090)">3298947812</div>
<div class="t l" style="left:191.9px;top:563.23px;transform:scaleX(0.9253)">Ellie</div>
<div class="t r" style="left:347.5px;width:55.90px;top:563.23px;font-size:9.8px;line-height:10.947px;height:10.947px;transform:scaleX(1.0531)">22/01/23</div>
<div class="t r" style="left:19.4px;width:36.00px;top:638.23px;font-size:9.8px;line-height:10.947px;height:10.947px;transform:scaleX(1.0090)">29</div>
<div class="t r" style="left:96.4px;width:90.80px;top:638.23px;font-size:9.8px;line-height:10.947px;height:10.947px;transform:scaleX(1.0090)">3349062913</div>
<div class="t l" style="left:191.9px;top:638.23px;transform:scaleX(0.9253)">Sherry Tilzer</div>
<div class="t r" style="left:347.5px;width:55.90px;top:638.23px;font-size:9.8px;line-height:10.947px;height:10.947px;transform:scaleX(1.0531)">23/01/23</div>
<div class="t r" style="left:19.4px;width:36.00px;top:651.90px;font-size:9.8px;line-height:10.947px;height:10.947px;transform:scaleX(1.0090)">30</div>
<div class="t r" style="left:96.4px;width:90.80px;top:651.90px;font-size:9.8px;line-height:10.947px;height:10.947px;transform:scaleX(1.0090)">3377874097</div>
<div class="t l" style="left:191.9px;top:651.90px;transform:scaleX(0.9253)">Antoine</div>
<div class="t r" style="left:347.5px;width:55.90px;top:651.90px;font-size:9.8px;line-height:10.947px;height:10.947px;transform:scaleX(1.0531)">23/01/23</div>
<div class="t r" style="left:19.4px;width:36.00px;top:665.57px;font-size:9.8px;line-height:10.947px;height:10.947px;transform:scaleX(1.0090)">31</div>
<div class="t r" style="left:96.4px;width:90.80px;top:665.57px;font-size:9.8px;line-height:10.947px;height:10.947px;transform:scaleX(1.0090)">3372620920</div>
<div class="t l" style="left:191.9px;top:665.57px;transform:scaleX(0.9253)">Jasmine</div>
<div class="t r" style="left:347.5px;width:55.90px;top:665.57px;font-size:9.8px;line-height:10.947px;height:10.947px;transform:scaleX(1.0531)">23/01/23</div>
<div class="t r" style="left:19.4px;width:36.00px;top:679.24px;font-size:9.8px;line-height:10.947px;height:10.947px;transform:scaleX(1.0090)">32</div>
<div class="t r" style="left:96.4px;width:90.80px;top:679.24px;font-size:9.8px;line-height:10.947px;height:10.947px;transform:scaleX(1.0090)">3314373627</div>
<div class="t l" style="left:191.9px;top:679.24px;transform:scaleX(0.9253)">harlee</div>
<div class="t r" style="left:347.5px;width:55.90px;top:679.24px;font-size:9.8px;line-height:10.947px;height:10.947px;transform:scaleX(1.0531)">24/01/23</div>
<div class="t r" style="left:19.4px;width:36.00px;top:692.91px;font-size:9.8px;line-height:10.947px;height:10.947px;transform:scaleX(1.0090)">33</div>
<div class="t r" style="left:96.4px;width:90.80px;top:692.91px;font-size:9.8px;line-height:10.947px;height:10.947px;transform:scaleX(1.0090)">3343585355</div>
<div class="t l" style="left:191.9px;top:692.91px;transform:scaleX(0.9253)">Cinnamonn</div>
<div class="t r" style="left:347.5px;width:55.90px;top:692.91px;font-size:9.8px;line-height:10.947px;height:10.947px;transform:scaleX(1.0531)">24/01/23</div>
<div class="t r" style="left:19.4px;width:36.00px;top:706.58px;font-size:9.8px;line-height:10.947px;height:10.947px;transform:scaleX(1.0090)">34</div>
<div class="t r" style="left:96.4px;width:90.80px;top:706.58px;font-size:9.8px;line-height:10.947px;height:10.947px;transform:scaleX(1.0090)">3312097316</div>
<div class="t l" style="left:191.9px;top:706.58px;transform:scaleX(0.9253)">Blake</div>
<div class="t r" style="left:347.5px;width:55.90px;top:706.58px;font-size:9.8px;line-height:10.947px;height:10.947px;transform:scaleX(1.0531)">24/01/23</div>
<div class="t r" style="left:19.4px;width:36.00px;top:720.25px;font-size:9.8px;line-height:10.947px;height:10.947px;transform:scaleX(1.0090)">35</div>
<div class="t r" style="left:96.4px;width:90.80px;top:720.25px;font-size:9.8px;line-height:10.947px;height:10.947px;transform:scaleX(1.0090)">3303843171</div>
<div class="t l" style="left:191.9px;top:720.25px;transform:scaleX(0.9253)">terrylowery0622</div>
<div class="t r" style="left:347.5px;width:55.90px;top:720.25px;font-size:9.8px;line-height:10.947px;height:10.947px;transform:scaleX(1.0531)">25/01/23</div>
<div class="t l" style="left:408.5px;top:720.25px;transform:scaleX(0.9580)">Excellent quality</div>
<div class="t r" style="left:19.4px;width:36.00px;top:733.92px;font-size:9.8px;line-height:10.947px;height:10.947px;transform:scaleX(1.0090)">36</div>
<div class="t r" style="left:96.4px;width:90.80px;top:733.92px;font-size:9.8px;line-height:10.947px;height:10.947px;transform:scaleX(1.0090)">3321927779</div>
<div class="t l" style="left:191.9px;top:733.92px;transform:scaleX(0.9253)">Hannah</div>
<div class="t r" style="left:347.5px;width:55.90px;top:733.92px;font-size:9.8px;line-height:10.947px;height:10.947px;transform:scaleX(1.0531)">25/01/23</div>
<div class="t l" style="left:408.5px;top:733.92px;transform:scaleX(0.9335)">It was very easy to submit a custom design and the final product was beyond my expectations!</div>
<svg style="left:409px;top:237px" width="41" height="54.5" viewBox="0 0 41 54.5">
<defs><filter id="b1" x="-10%" y="-10%" width="120%" height="120%"><feGaussianBlur stdDeviation="0.85"/></filter></defs>
<rect width="41" height="54.5" fill="#1c1620"/>
<g filter="url(#b1)">
<rect x="0" y="0" width="4.3" height="11.5" fill="#a06474"/>
<rect x="0" y="11.5" width="4.3" height="2.3" fill="#1a1418"/>
<rect x="0" y="13.8" width="4.3" height="9" fill="#cfc2a0"/>
<rect x="0" y="22.8" width="4.3" height="1.4" fill="#3a3030"/>
<rect x="0" y="24.2" width="4.3" height="12" fill="#d8ceb0"/>
<ellipse cx="2" cy="28" rx="1.8" ry="2" fill="#d02828"/>
<rect x="0" y="36.2" width="4.3" height="2.3" fill="#2a2428"/>
<rect x="0" y="38.5" width="4.3" height="10" fill="#9a8a84"/>
<rect x="7" y="1.4" width="32" height="14.1" fill="#a86878"/>
<rect x="36" y="2" width="3" height="6" fill="#e07098"/>
<rect x="7" y="2" width="4" height="13" fill="#a85c88"/>
<rect x="11" y="3.2" width="25.8" height="11.2" fill="#151430"/>
<rect x="16.5" y="6.2" width="16" height="3.6" fill="#585870"/>
<rect x="15" y="11" width="18" height="1.6" fill="#3e3e58"/>
<rect x="12.8" y="5" width="1.8" height="6" fill="#606070"/>
<rect x="7" y="16.4" width="32" height="28.4" fill="#3a2c3a"/>
<rect x="7" y="16.4" width="5" height="10" fill="#b868a8"/>
<rect x="7" y="26.4" width="5.5" height="10" fill="#a8a8a0"/>
<rect x="35.5" y="16.4" width="3.5" height="22" fill="#a070b8"/>
<ellipse cx="22.5" cy="21" rx="4.5" ry="1.8" fill="#e060e0"/>
<rect x="18.7" y="25" width="4.5" height="13.5" fill="#b0a070"/>
<rect x="7" y="36.7" width="32" height="8.1" fill="#d0b8c0"/>
<rect x="13.7" y="38" width="17.6" height="6.8" fill="#6a5a40"/>
<rect x="15" y="39.2" width="15" height="4.4" fill="#8a7850"/>
<rect x="4.3" y="44.8" width="36.7" height="3.2" fill="#141018"/>
<rect x="3" y="48" width="38" height="6.5" fill="#2a2830"/>
</g>
</svg>
<svg style="left:409px;top:448.5px" width="41" height="54.2" viewBox="0 0 41 54.2">
<defs><filter id="b2" x="-20%" y="-20%" width="140%" height="140%"><feGaussianBlur stdDeviation="0.8"/></filter>
<filter id="b2s" x="-20%" y="-20%" width="140%" height="140%"><feGaussianBlur stdDeviation="0.4"/></filter>
<linearGradient id="lg2" x1="0" y1="0" x2="0.3" y2="1"><stop offset="0" stop-color="#0b6e44"/><stop offset="0.6" stop-color="#09603a"/><stop offset="1" stop-color="#06482c"/></linearGradient></defs>
<rect width="41" height="54.2" fill="url(#lg2)"/>
<g filter="url(#b2)">
<path d="M0 0 H19.1 V15 Q19.1 20 13 20 H4 Q0 20 0 15 Z" fill="#12b06a"/>
<path d="M19.1 0 H29 V2.5 Q29 5.6 25 5.6 H21.5 Q19.1 5.6 19.1 3 Z" fill="#0f9c5e"/>
<rect x="20" y="8" width="10" height="6" fill="#075a40"/>
<rect x="37" y="0" width="4" height="3" fill="#30e088"/>
<ellipse cx="40" cy="16" rx="3" ry="2.4" fill="#1ccc7a"/>
<ellipse cx="1" cy="35" rx="1.6" ry="2.2" fill="#1ab06a"/>
<ellipse cx="37" cy="41" rx="4.8" ry="9" transform="rotate(-40 37 41)" fill="#16dc86"/>
<rect x="0" y="50" width="41" height="4.2" fill="#063e26"/>
</g>
<g filter="url(#b2s)">
<path d="M35 5 L41 12" stroke="#30c080" stroke-width="0.6"/>
<path d="M4.5 34 L33 12 L36.5 17 L8 39 Z" fill="#1a9c64" opacity="0.8"/>
<g transform="translate(6.5 38.5) rotate(-38)"><text x="0" y="0" textLength="36" lengthAdjust="spacingAndGlyphs" font-family="Liberation Serif" font-style="italic" font-weight="bold" font-size="8" fill="none" stroke="#c0ffe4" stroke-width="0.7">BlissDrops</text></g>
<ellipse cx="31" cy="34" rx="5" ry="3.2" transform="rotate(30 31 34)" fill="none" stroke="#50e0a0" stroke-width="1.1"/>
<path d="M22.3 41.3 L28.6 34.5" stroke="#20a868" stroke-width="0.8" fill="none"/>
<ellipse cx="17" cy="54" rx="3" ry="1.4" fill="none" stroke="#40c088" stroke-width="0.6"/>
</g>
</svg>
<svg style="left:409.2px;top:578.2px" width="102.7" height="54.1" viewBox="0 0 102.7 54.1">
<defs><filter id="b3" x="-10%" y="-30%" width="120%" height="160%"><feGaussianBlur stdDeviation="1.8"/></filter>
<filter id="g3" x="-10%" y="-30%" width="120%" height="160%"><feGaussianBlur stdDeviation="1.2" result="bl"/><feMerge><feMergeNode in="bl"/><feMergeNode in="SourceGraphic"/></feMerge></filter>
<linearGradient id="lg3" x1="0" y1="0" x2="0" y2="1"><stop offset="0" stop-color="#360a3a"/><stop offset="0.3" stop-color="#5a0e62"/><stop offset="0.55" stop-color="#8a1a9c"/><stop offset="0.72" stop-color="#56105e"/><stop offset="0.85" stop-color="#a828b8"/><stop offset="1" stop-color="#c832dc"/></linearGradient></defs>
<rect width="102.7" height="54.1" fill="url(#lg3)"/>
<g filter="url(#b3)">
<ellipse cx="50" cy="27" rx="48" ry="9" fill="#8a18a0" opacity="0.6"/>
<ellipse cx="14" cy="47" rx="9" ry="5" fill="#e040f0"/>
<ellipse cx="40" cy="48" rx="8" ry="5" fill="#d838e8"/>
<ellipse cx="64" cy="47" rx="7" ry="5" fill="#e040f0"/>
<ellipse cx="86" cy="48" rx="10" ry="5" fill="#d838e8"/>
<rect x="96" y="0" width="7" height="30" fill="#2a0830" opacity="0.7"/>
</g>
<rect x="0" y="52.8" width="102.7" height="1.3" fill="#50105a"/>
<path d="M99.5 0.5 L93.5 27 L101 50" stroke="#c080c8" stroke-width="0.5" fill="none" opacity="0.8"/>
<g filter="url(#g3)" fill="none" stroke="#ffd8ff" stroke-width="1.1" stroke-linecap="round" stroke-linejoin="round">
<path d="M15 20 C12 16.5 6 18 6.5 22 C7 25 12 26 11 29.5 C10 33 4 33.5 3.5 31.5 C3 29.5 12 28.5 24 28"/>
<path d="M14.8 20.5 L14 33.5 M11.5 24.5 L18 24"/>
<path d="M21.5 26 C19 25 17 29 18.5 31 C20 32 21.5 29 21.8 26 L22 31.5"/>
<path d="M23 26 L23.5 31 C24 32 26 31 26.5 26 L25 36 C24 40 20 42 19 40 C18.5 37 23 33 27 29"/>
<path d="M31 20.5 C32 24 33 29 35.5 32 C37 28 38.5 25 40 23.5 C40.5 27 41 30 43 32 C45 27 47 21 48 17.5"/>
<path d="M47.5 25.5 L47.8 31.5 M47.6 23 L47.7 23.3"/>
<path d="M49.5 31.5 C50 26 50.5 20 51.5 17 C52 20 51 27 50.5 31.5"/>
<path d="M56 26 C53 25 51.5 30 53 31.5 C54.5 32 56 29 56.3 24 C56.5 21 56.5 18 57 16.8 C56.5 22 56 28 57 32"/>
<path d="M58.5 32 L59.5 26.5 L60.5 32 C61 28 62 26 63 26.5 L63.5 32 C64 28 65 26 66 26.5 L66.5 29"/>
<path d="M67.3 26 L68 31 C69 32 71 30 72.5 26 L70 36 C68.5 40 65.5 41 65.2 39 C65 36 70 33 74 29"/>
<path d="M84 15.8 C81 17 80 24 79.5 31 C79 33 77.5 32 77 31.5 C80 30.5 84 31 87 31.5 M84 15.8 C86 15 85.5 19 82 24"/>
<path d="M90 25 C88 25.5 88 29 89.5 29.5 C91 30 92 26 90 25"/>
<path d="M92.5 25.5 L94 29.5 L95.5 25.5"/>
<path d="M96 28 C98 28 99 26 98 25 C96.5 24.5 95.5 28 96.5 29.5 C97.5 30.5 99 29.5 99.5 28"/>
</g>
</svg>

<div style="position:absolute;left:0;top:744.3px;width:1000px;height:22px;background:linear-gradient(#ececec,#e6e6e6);border-top:1px solid #d4d4d4"></div>
<svg width="1000" height="766" viewBox="0 0 1000 766">
<path d="M19 751.5 L12.5 756.3 L19 761 Z" fill="#b8b8b8"/>
<path d="M33.5 751.5 L40 756.3 L33.5 761 Z" fill="#b8b8b8"/>
<line x1="242.5" y1="745" x2="242.5" y2="763" stroke="#d2d2d2" stroke-width="1"/>
<rect x="221.5" y="754.6" width="9" height="1.6" fill="#555"/>
<rect x="225.2" y="751" width="1.6" height="8.6" fill="#555"/>
</svg>
<div style="position:absolute;left:54.8px;top:744px;width:153.5px;height:20.2px;background:#fff;border-radius:0 0 2px 2px;box-shadow:0 0.6px 1px rgba(0,0,0,0.25)"></div>
<div style="position:absolute;left:72.6px;top:749.9px;font-weight:bold;font-size:11.1px;line-height:12px;color:#23803f;-webkit-text-stroke:0.15px #23803f;white-space:pre">ExportComments.com</div>

</body></html>
